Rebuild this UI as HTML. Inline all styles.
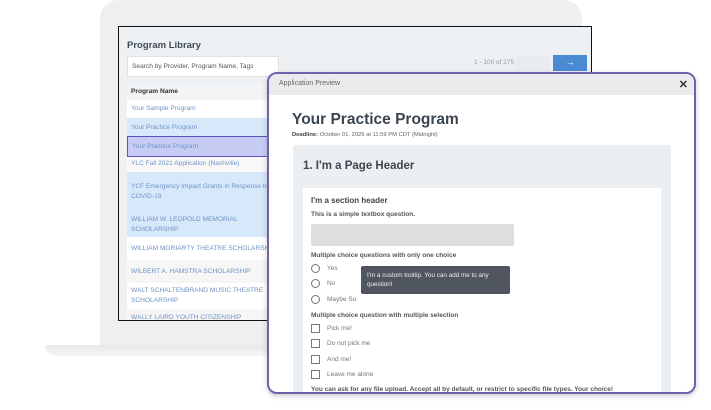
<!DOCTYPE html>
<html><head><style>
*{margin:0;padding:0;box-sizing:border-box}
body{width:711px;height:410px;background:#fff;position:relative;overflow:hidden;font-family:"Liberation Sans",sans-serif}
.a{position:absolute}
.lap{left:100px;top:0;width:482px;height:345px;background:#efefef;border-radius:18px 18px 0 0}
.base{left:45px;top:345px;width:560px;height:11px;background:linear-gradient(#e8e8e8,#f6f6f6);border-radius:0 0 40px 40px}
.scr{left:118px;top:26px;width:474px;height:295px;background:#eef1f3;border:1.5px solid #111;overflow:hidden}
.row{position:absolute;left:8px;width:150px;font-size:6.6px;color:#6f93c4;padding-left:4px;line-height:10px}
.modal{left:267px;top:72px;width:429px;height:322px;background:#fff;border:2px solid #6e62ad;border-radius:10px;overflow:hidden;box-shadow:0 2px 6px rgba(0,0,0,.2)}
.lbl{font-size:6.5px;font-weight:bold;color:#555}
.opt{position:absolute;left:8px;font-size:6.5px;color:#777}
.rad{display:inline-block;width:9px;height:9px;border:1px solid #777;border-radius:50%;vertical-align:middle;margin-right:7px}
.chk{display:inline-block;width:9px;height:9px;border:1px solid #777;vertical-align:middle;margin-right:7px}
</style></head><body>
<div class="a lap"></div>
<div class="a base"></div>
<div class="a scr">
 <div class="a" style="left:8px;top:13px;font-size:9.5px;font-weight:bold;color:#3d4a55">Program Library</div>
 <div class="a" style="left:8px;top:29px;width:152px;height:21px;background:#fff;border:1px solid #e2e2e2;font-size:6.6px;color:#555;padding:6px 4px">Search by Provider, Program Name, Tags</div>
 <div class="a" style="left:355px;top:32px;font-size:6.5px;color:#999">1 - 100 of 275</div>
 <div class="a" style="left:397px;top:28px;width:34px;height:16px;background:#e8ecef;color:#fff;font-size:8px;text-align:center">←</div>
 <div class="a" style="left:434px;top:28px;width:34px;height:16px;background:#4a8ad3;color:#fff;font-size:9px;text-align:center;line-height:15px">→</div>
 <div class="row" style="top:56px;height:17px;background:#f3f4f5;color:#333;font-weight:bold;line-height:17px">Program Name</div>
 <div class="row" style="top:73px;height:18px;background:#fff;line-height:18px">Your Sample Program</div>
 <div class="row" style="top:91px;height:18px;background:#d7e8fb;line-height:20px">Your Practice Program</div>
 <div class="row" style="top:109px;height:21px;background:#c6ccf4;border:1.5px solid #5a52b6;line-height:19px">Your Practice Program</div>
 <div class="row" style="top:130px;height:15px;background:#f8f8f8;line-height:13px">YLC Fall 2021 Application (Nashville)</div>
 <div class="row" style="top:145px;height:65px;background:#d7e8fb"></div>
 <div class="row" style="top:155px">YCF Emergency Impact Grants in Response to COVID-19</div>
 <div class="row" style="top:188px">WILLIAM W. LEOPOLD MEMORIAL SCHOLARSHIP</div>
 <div class="row" style="top:210px;height:23px;background:#fff;line-height:23px;white-space:nowrap;overflow:hidden">WILLIAM MORIARTY THEATRE SCHOLARSHIP</div>
 <div class="row" style="top:233px;height:23px;background:#f6f6f6;line-height:23px">WILBERT A. HAMSTRA SCHOLARSHIP</div>
 <div class="row" style="top:256px;height:26px;background:#fff;padding-top:3px">WALT SCHALTENBRAND MUSIC THEATRE SCHOLARSHIP</div>
 <div class="row" style="top:282px;height:20px;background:#f6f6f6;padding-top:4px">WALLY LAIRD YOUTH CITIZENSHIP</div>
</div>
<div class="a modal">
 <div class="a" style="left:0;top:0;width:100%;height:21px;background:#e9ebed;font-size:7px;color:#666;padding:6px 10px">Application Preview</div>
 <div class="a" style="right:6px;top:4px;font-size:11px;font-weight:bold;color:#333">✕</div>
 <div class="a" style="left:23px;top:37px;font-size:15.5px;font-weight:bold;color:#3c4650">Your Practice Program</div>
 <div class="a" style="left:23px;top:58px;font-size:5.8px;color:#666"><b style="color:#444">Deadline:</b> October 01, 2026 at 11:59 PM CDT (Midnight)</div>
 <div class="a" style="left:24px;top:71px;width:378px;height:260px;background:#eceff1;border-radius:2px">
  <div class="a" style="left:10px;top:15px;font-size:11.5px;font-weight:bold;color:#3c4650">1. I'm a Page Header</div>
  <div class="a" style="left:10px;top:43px;width:358px;height:220px;background:#fff">
   <div class="a" style="left:8px;top:8px;font-size:8px;font-weight:bold;color:#444">I'm a section header</div>
   <div class="a lbl" style="left:8px;top:23px">This is a simple textbox question.</div>
   <div class="a" style="left:8px;top:36px;width:203px;height:22px;background:#dedede;border-radius:2px"></div>
   <div class="a lbl" style="left:8px;top:64px">Multiple choice questions with only one choice</div>
   <div class="opt" style="top:76px"><span class="rad"></span>Yes</div>
   <div class="opt" style="top:91px"><span class="rad"></span>No</div>
   <div class="opt" style="top:107px"><span class="rad"></span>Maybe So</div>
   <div class="a" style="left:58px;top:78px;width:149px;height:28px;background:#4f5660;border-radius:2px;color:#eee;font-size:6.3px;padding:5px 6px;line-height:9px">I'm a custom tooltip. You can add me to any question!</div>
   <div class="a lbl" style="left:8px;top:124px">Multiple choice question with multiple selection</div>
   <div class="opt" style="top:136px"><span class="chk"></span>Pick me!</div>
   <div class="opt" style="top:151px"><span class="chk"></span>Do not pick me</div>
   <div class="opt" style="top:167px"><span class="chk"></span>And me!</div>
   <div class="opt" style="top:182px"><span class="chk"></span>Leave me alone</div>
   <div class="a lbl" style="left:8px;top:198px;white-space:nowrap">You can ask for any file upload. Accept all by default, or restrict to specific file types. Your choice!</div>
  </div>
 </div>
</div>
</body></html>
